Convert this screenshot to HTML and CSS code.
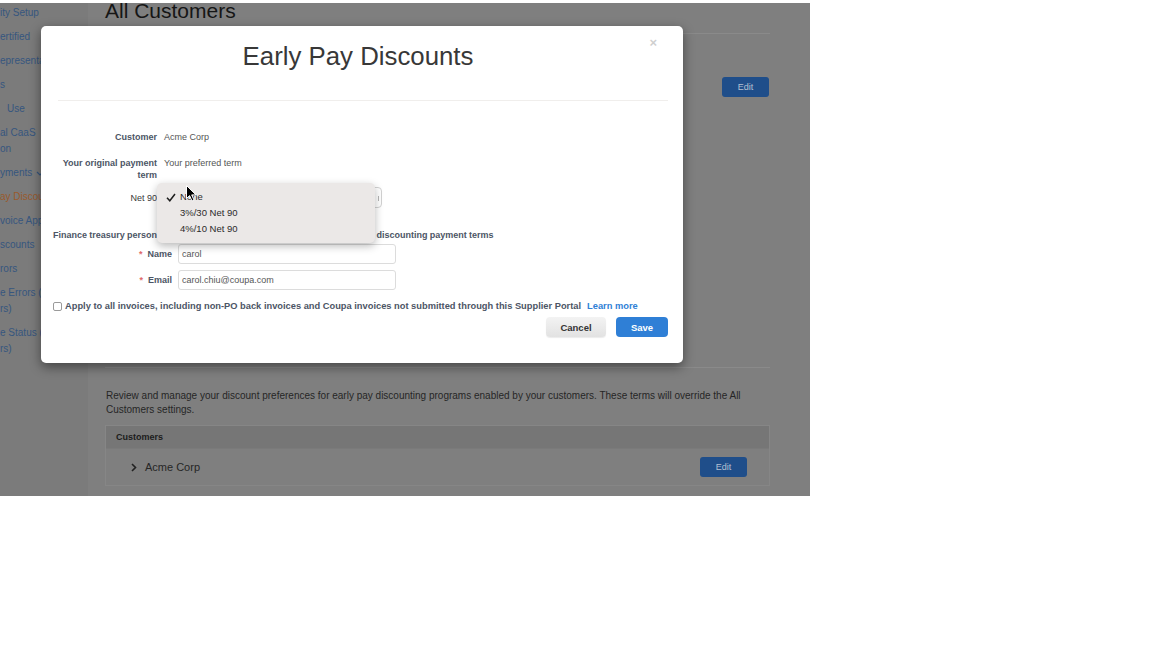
FILE: index.html
```html
<!DOCTYPE html>
<html lang="en">
<head>
<meta charset="utf-8">
<title>All Customers – Early Pay Discounts</title>
<link rel="stylesheet" href="styles.css">
</head>
<body>
<div class="screen">
  <nav class="sidebar">
    <a class="nav-item">ity Setup</a>
    <a class="nav-item">ertified</a>
    <a class="nav-item">epresentative</a>
    <a class="nav-item">s</a>
    <a class="nav-item nav-pad">Use</a>
    <a class="nav-item">al CaaS<br>on</a>
    <a class="nav-item">yments <svg class="nav-caret" width="8" height="5" viewBox="0 0 8 5"><polyline points="1,1 4,4 7,1" fill="none" stroke="currentColor" stroke-width="1.2"/></svg></a>
    <a class="nav-item nav-active">ay Discounts</a>
    <a class="nav-item">voice Approvals</a>
    <a class="nav-item">scounts</a>
    <a class="nav-item">rors</a>
    <a class="nav-item">e Errors (Invoices<br>rs)</a>
    <a class="nav-item">e Status (Invoices<br>rs)</a>
  </nav>

  <main class="content">
    <h1 class="page-title">All Customers</h1>
    <section class="panel">
      <div class="panel-actions"><button class="btn-edit">Edit</button></div>
    </section>
    <p class="intro">Review and manage your discount preferences for early pay discounting programs enabled by your customers. These terms will override the All Customers settings.</p>
    <div class="customers">
      <div class="customers-head">Customers</div>
      <div class="customer-row">
        <svg class="row-chev" width="6" height="9" viewBox="0 0 6 9"><polyline points="1,1 4.5,4.5 1,8" fill="none" stroke="currentColor" stroke-width="1.6"/></svg>
        <span class="customer-name">Acme Corp</span>
        <button class="btn-edit">Edit</button>
      </div>
    </div>
  </main>

  <div class="modal">
    <span class="modal-close">×</span>
    <div class="modal-head">
      <h2 class="modal-title">Early Pay Discounts</h2>
    </div>
    <div class="modal-body">
      <div class="field">
        <div class="field-label">Customer</div>
        <div class="field-value">Acme Corp</div>
      </div>
      <div class="field field-gap-sm">
        <div class="field-label">Your original payment term</div>
        <div class="field-value">Your preferred term</div>
      </div>
      <div class="field field-center field-gap-lg">
        <div class="field-label field-label-plain">Net 90</div>
        <div class="select"><span class="select-arrow"></span></div>
      </div>
      <div class="section-label">Finance treasury person to contact with any questions about your early pay discounting payment terms</div>
      <div class="field field-center contact">
        <div class="field-label"><span class="req">*</span>Name</div>
        <div class="input">carol</div>
      </div>
      <div class="field field-center contact contact-last">
        <div class="field-label"><span class="req">*</span>Email</div>
        <div class="input">carol.chiu@coupa.com</div>
      </div>
      <label class="apply">
        <span class="checkbox"></span>
        <span>Apply to all invoices, including non-PO back invoices and Coupa invoices not submitted through this Supplier Portal</span>
        <a class="learn">Learn more</a>
      </label>
      <div class="modal-actions">
        <button class="btn btn-cancel">Cancel</button>
        <button class="btn btn-save">Save</button>
      </div>
    </div>

    <ul class="menu">
      <li class="menu-item"><svg class="menu-check" width="10" height="9" viewBox="0 0 10 9"><polyline points="1,4.8 3.8,7.8 9,1" fill="none" stroke="#1e1e1e" stroke-width="1.5"/></svg>None</li>
      <li class="menu-item">3%/30 Net 90</li>
      <li class="menu-item">4%/10 Net 90</li>
    </ul>
  </div>

  <svg class="cursor" width="11" height="17" viewBox="0 0 11 17"><path d="M0.5 0.5 L0.5 13.5 L3.6 10.6 L6 16 L8 15.1 L5.7 9.9 L10 9.9 Z" fill="#000" stroke="#fff" stroke-width="1"/></svg>
</div>
</body>
</html>
```

FILE: styles.css
```css
* {
  box-sizing: border-box;
}

html, body {
  margin: 0;
  padding: 0;
  background: #fff;
}

body {
  font-family: "Liberation Sans", Arial, Helvetica, sans-serif;
}

/* dimmed application page behind the dialog */
.screen {
  position: relative;
  width: 810px;
  height: 493px;
  margin-top: 3px;
  display: flex;
  background: #7f7f7f;
  overflow: hidden;
}

.sidebar {
  width: 88px;
  flex: none;
  background: #7b7b7b;
  padding-top: 2px;
  display: flex;
  flex-direction: column;
  gap: 8px;
  overflow: hidden;
}

.nav-item {
  display: block;
  font-size: 10px;
  line-height: 16px;
  color: #36567f;
  white-space: nowrap;
}

.nav-pad {
  padding-left: 7px;
}

.nav-active {
  color: #9a5a2c;
}

.nav-caret {
  vertical-align: middle;
  margin-left: 1px;
}

.content {
  flex: 1;
  padding: 0 40px 0 17px;
}

.page-title {
  margin: -4px 0 10px;
  font-size: 21px;
  line-height: 24px;
  font-weight: normal;
  color: #161616;
}

.panel {
  height: 335px;
  border-top: 1px solid #8a8a8a;
  border-bottom: 1px solid #8a8a8a;
  padding: 43px 1px 0;
}

.panel-actions {
  display: flex;
  justify-content: flex-end;
}

.btn-edit {
  width: 47px;
  height: 20px;
  border: 0;
  border-radius: 3px;
  background: #1f4e8a;
  color: #b3c0d2;
  font-family: inherit;
  font-size: 9px;
  padding: 0;
}

.intro {
  margin: 21px 0 8px;
  padding-left: 1px;
  font-size: 10px;
  line-height: 14px;
  color: #262626;
}

.customers {
  border: 1px solid #868686;
}

.customers-head {
  height: 23px;
  padding-left: 10px;
  display: flex;
  align-items: center;
  background: #767676;
  border-bottom: 1px solid #7a7a7a;
  font-size: 9px;
  font-weight: bold;
  color: #1c1c1c;
}

.customer-row {
  height: 36px;
  display: flex;
  align-items: center;
  padding: 0 22px 0 25px;
}

.row-chev {
  color: #222;
  margin-right: 8px;
}

.customer-name {
  flex: 1;
  font-size: 11px;
  color: #262626;
}

/* dialog */
.modal {
  position: absolute;
  left: 41px;
  top: 23px;
  width: 642px;
  height: 337px;
  background: #fff;
  border-radius: 5px;
  box-shadow: 0 4px 12px rgba(0, 0, 0, 0.45);
}

.modal-close {
  position: absolute;
  top: 9px;
  right: 26px;
  font-size: 13px;
  font-weight: bold;
  color: #cfcfcf;
}

.modal-head {
  height: 75px;
  margin: 0 15px 0 17px;
  padding: 16px 10px 0 0;
  border-bottom: 1px solid #f0eeec;
}

.modal-title {
  margin: 0;
  text-align: center;
  font-size: 25.8px;
  line-height: 28px;
  font-weight: normal;
  color: #383838;
}

.modal-body {
  padding: 30px 15px 0 12px;
}

.field {
  display: flex;
  align-items: flex-start;
  gap: 7px;
  margin-bottom: 14px;
  font-size: 9px;
  line-height: 12px;
}

.field-gap-sm {
  margin-bottom: 6px;
}

.field-gap-lg {
  margin-bottom: 21px;
}

.field-center {
  align-items: center;
}

.field-label {
  width: 104px;
  flex: none;
  text-align: right;
  font-weight: bold;
  color: #4c5565;
}

.field-label-plain {
  font-weight: normal;
  color: #3a3a3a;
}

.field-value {
  color: #555;
}

.select {
  position: relative;
  width: 218px;
  height: 21px;
  border: 1px solid #d2d2d2;
  border-radius: 4px;
  background: #fff;
}

.select-arrow {
  position: absolute;
  right: 2px;
  top: 8px;
  width: 1px;
  height: 5px;
  background: #b5b5b5;
}

.section-label {
  margin-bottom: 3px;
  font-size: 9px;
  line-height: 12px;
  font-weight: bold;
  word-spacing: -0.25px;
  color: #4c5565;
  white-space: nowrap;
}

.contact {
  gap: 6px;
  margin-bottom: 6px;
}

.contact .field-label {
  width: 119px;
}

.contact-last {
  margin-bottom: 10px;
}

.req {
  color: #e06a6a;
  margin-right: 5px;
}

.input {
  width: 218px;
  height: 20px;
  padding-left: 3px;
  display: flex;
  align-items: center;
  border: 1px solid #dcdcdc;
  border-radius: 3px;
  font-size: 9px;
  color: #555;
}

.apply {
  display: flex;
  align-items: center;
  margin-bottom: 5px;
  font-size: 9.3px;
  line-height: 12px;
  font-weight: bold;
  color: #4c5565;
  white-space: nowrap;
}

.checkbox {
  width: 9px;
  height: 9px;
  margin: 1px 3px 0 0;
  border: 1px solid #9a9a9a;
  border-radius: 2px;
  background: #fff;
}

.learn {
  margin-left: 6px;
  color: #2f7fd6;
}

.modal-actions {
  display: flex;
  justify-content: flex-end;
  gap: 10px;
}

.btn {
  height: 20px;
  border: 0;
  border-radius: 4px;
  padding: 0;
  font-family: inherit;
  font-size: 9.5px;
  font-weight: bold;
}

.btn-cancel {
  width: 60px;
  background: linear-gradient(#f3f3f3, #e2e2e2);
  color: #333;
  box-shadow: 0 1px 1px rgba(0, 0, 0, 0.08);
}

.btn-save {
  width: 52px;
  background: #2f7fd6;
  color: #fff;
}

/* open native list of the preferred-term select */
.menu {
  position: absolute;
  left: 116px;
  top: 157px;
  width: 218px;
  height: 60px;
  margin: 0;
  padding: 6px 0;
  list-style: none;
  background: #ebe8e7;
  border-radius: 5px;
  box-shadow: 0 3px 9px rgba(0, 0, 0, 0.28);
}

.menu-item {
  position: relative;
  height: 16px;
  line-height: 16px;
  padding-left: 23px;
  font-size: 9.5px;
  color: #2b2b2b;
}

.menu-check {
  position: absolute;
  left: 9px;
  top: 4px;
}

.cursor {
  position: absolute;
  left: 186px;
  top: 182px;
}
```
